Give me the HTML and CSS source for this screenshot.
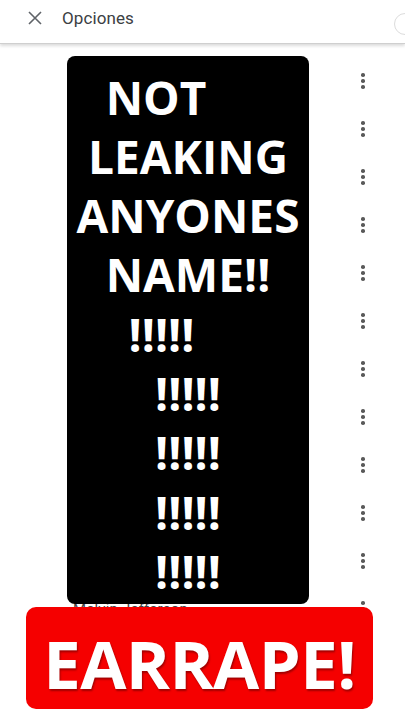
FILE: index.html
```html
<!DOCTYPE html>
<html lang="es">
<head>
<meta charset="utf-8">
<title>Opciones</title>
<link rel="stylesheet" href="styles.css">
</head>
<body>
<div class="screen">
  <header class="topbar">
    <svg class="close" width="14" height="14" viewBox="0 0 14 14" aria-hidden="true">
      <path d="M1 1 L13 13 M13 1 L1 13" stroke="#5f6368" stroke-width="1.6" fill="none"/>
    </svg>
    <span class="title">Opciones</span>
    <span class="ring"></span>
  </header>
  <ul class="list">
    <li class="row"><span class="name"></span><span class="kebab"><i></i><i></i><i></i></span></li>
    <li class="row"><span class="name"></span><span class="kebab"><i></i><i></i><i></i></span></li>
    <li class="row"><span class="name"></span><span class="kebab"><i></i><i></i><i></i></span></li>
    <li class="row"><span class="name"></span><span class="kebab"><i></i><i></i><i></i></span></li>
    <li class="row"><span class="name"></span><span class="kebab"><i></i><i></i><i></i></span></li>
    <li class="row"><span class="name"></span><span class="kebab"><i></i><i></i><i></i></span></li>
    <li class="row"><span class="name"></span><span class="kebab"><i></i><i></i><i></i></span></li>
    <li class="row"><span class="name"></span><span class="kebab"><i></i><i></i><i></i></span></li>
    <li class="row"><span class="name"></span><span class="kebab"><i></i><i></i><i></i></span></li>
    <li class="row"><span class="name"></span><span class="kebab"><i></i><i></i><i></i></span></li>
    <li class="row"><span class="name"></span><span class="kebab"><i></i><i></i><i></i></span></li>
    <li class="row"><span class="name">Melvin Jefferson</span><span class="kebab"><i></i><i></i><i></i></span></li>
    <li class="row"><span class="name"></span><span class="kebab"><i></i><i></i><i></i></span></li>
  </ul>

  <div class="meme">
    <div class="line line-not">NOT</div>
    <div class="line">LEAKING</div>
    <div class="line">ANYONES</div>
    <div class="line">NAME!!</div>
    <div class="line bang bang-first">!!!!!</div>
    <div class="line bang">!!!!!</div>
    <div class="line bang">!!!!!</div>
    <div class="line bang">!!!!!</div>
    <div class="line bang">!!!!!</div>
  </div>

  <div class="banner">EARRAPE!</div>
</div>
</body>
</html>
```

FILE: styles.css
```css
* { box-sizing: border-box; }

html, body {
  margin: 0;
  padding: 0;
  background: #ffffff;
}

.screen {
  position: relative;
  width: 405px;
  height: 720px;
  overflow: hidden;
  background: #ffffff;
  font-family: Roboto, "Noto Sans", sans-serif;
}

/* ---------- header ---------- */
.topbar {
  display: flex;
  align-items: center;
  height: 44px;
  padding: 0 0 7px 28px;
  border-bottom: 1px solid #cfcfcf;
  box-shadow: 0 2px 3px rgba(0, 0, 0, 0.14);
  background: #fff;
}

.close {
  flex: none;
  display: block;
}

.title {
  margin-left: 20px;
  font-size: 17px;
  color: #3c4043;
  letter-spacing: 0.1px;
}

.ring {
  margin-left: auto;
  margin-right: -11px;
  align-self: flex-start;
  margin-top: 13px;
  width: 22px;
  height: 22px;
  border: 1.5px solid #dcdcdc;
  border-radius: 50%;
}

/* ---------- list ---------- */
.list {
  list-style: none;
  margin: 13px 0 0;
  padding: 0;
}

.row {
  display: flex;
  align-items: center;
  height: 48px;
  padding-left: 73px;
  padding-right: 40px;
}

.name {
  font-size: 15px;
  color: #444;
  letter-spacing: 0.2px;
}

.kebab {
  margin-left: auto;
  display: flex;
  flex-direction: column;
  gap: 2.4px;
}

.kebab i {
  display: block;
  width: 3.6px;
  height: 3.6px;
  border-radius: 50%;
  background: #5a5a5a;
}

/* ---------- black meme card (overlay) ---------- */
.meme {
  position: absolute;
  left: 67px;
  top: 56px;
  width: 242px;
  height: 548px;
  background: #000;
  border-radius: 8px;
  padding-top: 11.5px;
  color: #fff;
  font-family: "Open Sans", "DejaVu Sans", sans-serif;
  font-weight: 700;
  font-size: 46px;
  line-height: 59.3px;
  text-align: center;
}

.line {
  white-space: nowrap;
}

.line-not {
  padding-right: 64px;
}

.bang-first {
  padding-right: 53px;
}

/* ---------- red banner (overlay) ---------- */
.banner {
  position: absolute;
  left: 26px;
  top: 607px;
  width: 347px;
  height: 102px;
  background: #f50000;
  border-radius: 10px;
  padding-top: 10px;
  color: #fff;
  font-family: "Open Sans", "DejaVu Sans", sans-serif;
  font-weight: 700;
  font-size: 67px;
  letter-spacing: -0.6px;
  line-height: 92px;
  text-align: center;
  white-space: nowrap;
  text-shadow: 1px 2px 2px rgba(0, 0, 0, 0.35);
}
```
